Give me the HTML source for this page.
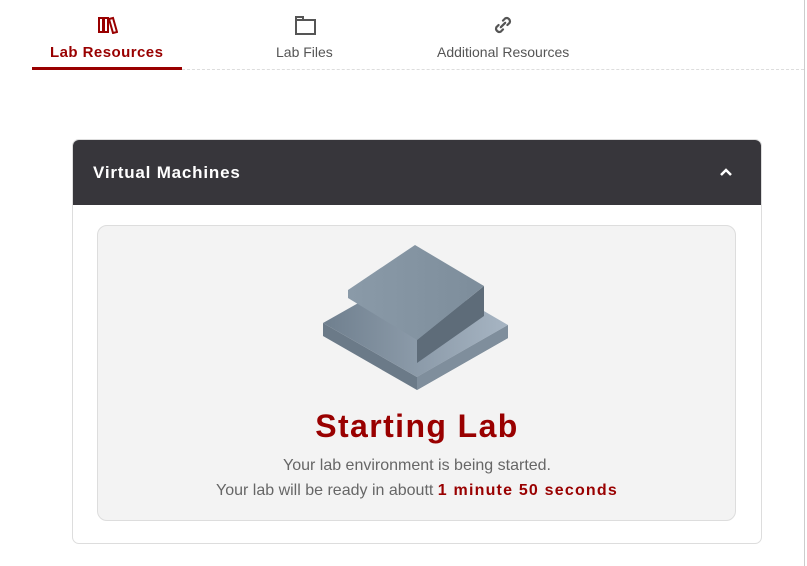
<!DOCTYPE html>
<html><head><style>
body{margin:0;width:807px;height:566px;background:#fff;font-family:"Liberation Sans",sans-serif;position:relative;overflow:hidden}
#vl{position:absolute;left:804px;top:0;width:1px;height:566px;background:#ccc}
</style></head><body>
<div id="vl"></div>
<div style="position:absolute;left:182px;top:69px;width:622px;border-top:1px dashed #ddd"></div>
<div style="position:absolute;left:32px;top:67px;width:150px;height:3px;background:#990000"></div>
<svg style="position:absolute;left:98px;top:16px" width="20" height="18" viewBox="0 0 20 18"><g fill="none" stroke="#990000" stroke-width="2"><rect x="1" y="2" width="4" height="14"/><rect x="6" y="2" width="4" height="14"/><path d="M11 3l4-1 4 14-4 1z"/></g></svg>
<div style="position:absolute;left:50px;top:44px;font-size:15px;font-weight:bold;color:#990000;letter-spacing:0.45px">Lab Resources</div>
<svg style="position:absolute;left:295px;top:16px" width="21" height="19" viewBox="0 0 21 19"><path d="M1 1h7v3h12v14H1zM1 4h7" fill="none" stroke="#555" stroke-width="2"/></svg>
<div style="position:absolute;left:276px;top:44px;font-size:14px;color:#555">Lab Files</div>
<svg style="position:absolute;left:492px;top:14px" width="22" height="22" viewBox="0 0 20 20"><g fill="none" stroke="#555" stroke-width="2" stroke-linecap="round"><path d="M8 12l4-4"/><path d="M10 6l2-2a3 3 0 014 4l-2 2"/><path d="M10 14l-2 2a3 3 0 01-4-4l2-2"/></g></svg>
<div style="position:absolute;left:437px;top:44px;font-size:14px;color:#555">Additional Resources</div>

<div style="position:absolute;left:72px;top:139px;width:688px;height:403px;border:1px solid #ddd;border-radius:7px;overflow:hidden">
<div style="height:65px;background:#37363b;color:#fff;font-weight:bold;font-size:17px;line-height:65px;padding-left:20px;letter-spacing:0.8px">Virtual Machines
<svg style="position:absolute;right:28px;top:27px" width="14" height="10" viewBox="0 0 14 10"><path d="M2 8l5-5 5 5" fill="none" stroke="#fff" stroke-width="2.5"/></svg></div>
<div style="position:absolute;left:24px;top:85px;width:637px;height:294px;background:#f3f3f3;border:1px solid #ddd;border-radius:10px"></div>
</div>

<svg style="position:absolute;left:0;top:0" width="807" height="566">
<defs>
<linearGradient id="a" x1="0" x2="1"><stop offset="0" stop-color="#6f7f8e"/><stop offset="1" stop-color="#a7b5c3"/></linearGradient>
<linearGradient id="b" x1="0" x2="1"><stop offset="0" stop-color="#8a9aa8"/><stop offset="1" stop-color="#7d8d9b"/></linearGradient>
</defs>
<path d="M323 323L417 377L508 325L508 338L417 390L323 336Z" fill="#6b7a88"/>
<path d="M417 377L508 325L508 338L417 390Z" fill="#7f8e9c"/>
<path d="M323 323L415 271L508 325L417 377Z" fill="url(#a)"/>
<path d="M417 340L484 286L484 316L417 363Z" fill="#5e6c79"/>
<path d="M348 290L415 245L484 286L417 340L348 298Z" fill="url(#b)"/>
</svg>

<div style="position:absolute;left:97px;width:640px;top:408px;text-align:center;font-size:32px;font-weight:bold;color:#990000;letter-spacing:1.4px">Starting Lab</div>
<div style="position:absolute;left:97px;width:640px;top:457px;text-align:center;font-size:16px;color:#666">Your lab environment is being started.</div>
<div style="position:absolute;left:97px;width:640px;top:482px;text-align:center;font-size:16px;color:#666">Your lab will be ready in aboutt <b style="color:#990000;letter-spacing:1.2px">1 minute 50 seconds</b></div>
</body></html>
